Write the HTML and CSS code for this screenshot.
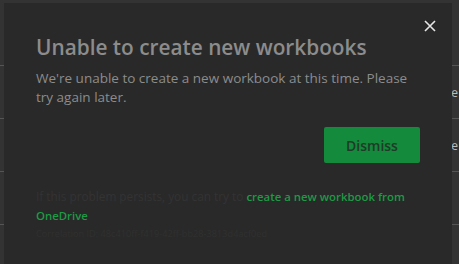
FILE: index.html
```html
<!DOCTYPE html>
<html lang="en">
<head>
  <meta charset="UTF-8" />
  <meta name="viewport" content="width=device-width, initial-scale=1.0"/>
  <title>Unable to create new workbooks</title>
  <link rel="stylesheet" href="styles.css">
</head>
<body>

<div class="page">
  <div class="row"></div>
  <div class="row"><span class="cell">Page</span></div>
  <div class="row"><span class="cell">Shared.e</span></div>
  <div class="row"></div>
  <div class="row"></div>
</div>

<div class="dialog" role="dialog">
  <button class="close" aria-label="Close">
    <svg width="12" height="12" viewBox="0 0 12 12">
      <path d="M1 1 L11 11 M11 1 L1 11" stroke="#e6e6e6" stroke-width="1.6" fill="none"/>
    </svg>
  </button>

  <h2 class="title">Unable to create new workbooks</h2>
  <p class="message">We're unable to create a new workbook at this time. Please try again later.</p>

  <div class="actions">
    <button class="dismiss">Dismiss</button>
  </div>

  <p class="hint">If this problem persists, you can try to <a href="#">create a new workbook from OneDrive</a></p>
  <p class="correlation">Correlation ID: 48c410ff-f419-42ff-bb28-3813d4acf0ed</p>
</div>

</body>
</html>
```

FILE: styles.css
```css
body {
  font-family: "Open Sans", "Noto Sans", sans-serif;
  background-color: #333333;
  margin: 0;
  padding: 0;
  overflow: hidden;
}

.page {
  padding-top: 13px;
}

.row {
  height: 52px;
  border-bottom: 1px solid #555555;
  display: flex;
  align-items: center;
  justify-content: flex-end;
  padding-right: 1px;
}

.cell {
  color: #bbbbbb;
  font-size: 12px;
}

.dialog {
  position: absolute;
  left: 4px;
  top: 3px;
  width: 448px;
  height: 300px;
  box-sizing: border-box;
  background-color: #292929;
  padding: 30px 32px 0 32px;
}

.close {
  position: absolute;
  top: 17px;
  right: 16px;
  width: 12px;
  height: 12px;
  padding: 0;
  border: none;
  background: none;
  display: flex;
}

.title {
  margin: 0;
  font-size: 20.8px;
  font-weight: 600;
  color: #8c8c8c;
  line-height: 28px;
}

.message {
  margin: 8px 0 0 0;
  font-size: 13.5px;
  color: #8c8c8c;
  line-height: 19px;
}

.actions {
  display: flex;
  justify-content: flex-end;
  margin-top: 20px;
}

.dismiss {
  width: 96px;
  height: 36px;
  background-color: #138a3c;
  color: #1f3a27;
  border: none;
  border-radius: 2px;
  font-family: inherit;
  font-size: 14px;
  font-weight: 600;
}

.hint {
  margin: 24px 0 0 0;
  font-size: 11.8px;
  line-height: 18px;
  color: #333333;
}

.hint a {
  color: #1d9a45;
  font-size: 11.4px;
  font-weight: 600;
  text-decoration: none;
}

.correlation {
  margin: 2px 0 0 0;
  font-size: 9.2px;
  line-height: 14px;
  color: #303030;
}
```
